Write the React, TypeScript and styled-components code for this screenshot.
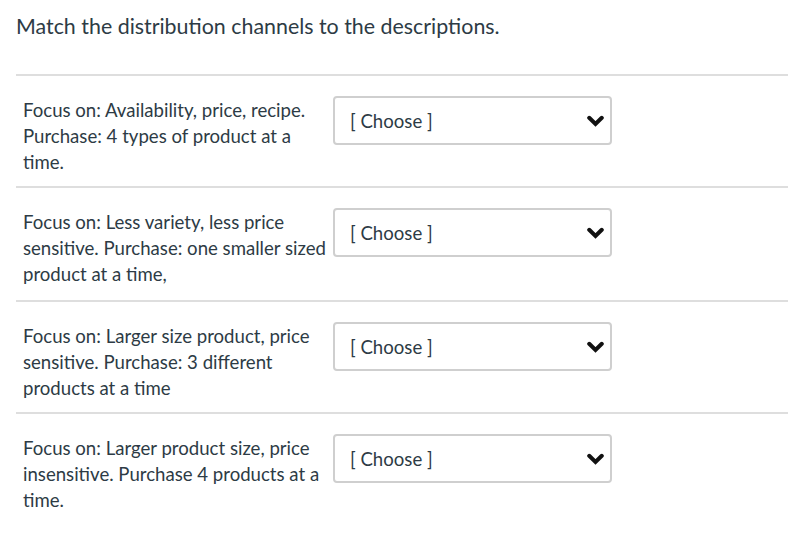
import React from "react";
import styled, { createGlobalStyle } from "styled-components";

const Global = createGlobalStyle`
  html, body { margin: 0; padding: 0; background: #ffffff; }
  body { font-family: Lato, "Open Sans", "Liberation Sans", sans-serif; color: #2d3b45; }
`;

const Page = styled.div`
  padding: 11px 0 0 16px;
  width: 772px;
`;

const Title = styled.div`
  font-size: 21.4px;
  line-height: 30px;
  color: #2d3b45;
  margin-bottom: 33px;
`;

const Row = styled.div<{ $extra?: number }>`
  display: flex;
  align-items: flex-start;
  gap: 6px;
  border-top: 2px solid #dedede;
  padding: 21px 0 ${(p) => 11 + (p.$extra ?? 0)}px 7px;
`;

const Label = styled.div`
  width: 304px;
  flex: none;
  font-size: 18.6px;
  line-height: 26px;
  color: #2d3b45;
`;

const Select = styled.div`
  box-sizing: border-box;
  width: 279px;
  height: 49px;
  margin-top: -1px;
  border: 2px solid #cfcfcf;
  border-radius: 4px;
  display: flex;
  align-items: center;
  justify-content: space-between;
  padding: 0 6px 0 15px;
  font-size: 18.6px;
  color: #2d3b45;
  background: #fff;
`;

const Chevron = () => (
  <svg width="17" height="12" viewBox="0 0 17 12">
    <polyline
      points="2.2,2.8 8.5,9 14.8,2.8"
      fill="none"
      stroke="#111"
      strokeWidth="4"
      strokeLinecap="round"
      strokeLinejoin="miter"
    />
  </svg>
);

const rows = [
  { text: "Focus on: Availability, price, recipe. Purchase: 4 types of product at a time.", extra: 0 },
  { text: "Focus on: Less variety, less price sensitive. Purchase: one smaller sized product at a time,", extra: 2 },
  { text: "Focus on: Larger size product, price sensitive. Purchase: 3 different products at a time", extra: 0 },
  { text: "Focus on: Larger product size, price insensitive. Purchase 4 products at a time.", extra: 0 },
];

export default function App() {
  return (
    <>
      <Global />
      <Page>
        <Title>Match the distribution channels to the descriptions.</Title>
        {rows.map((r, i) => (
          <Row key={i} $extra={r.extra}>
            <Label>{r.text}</Label>
            <Select>
              <span>[ Choose ]</span>
              <Chevron />
            </Select>
          </Row>
        ))}
      </Page>
    </>
  );
}
